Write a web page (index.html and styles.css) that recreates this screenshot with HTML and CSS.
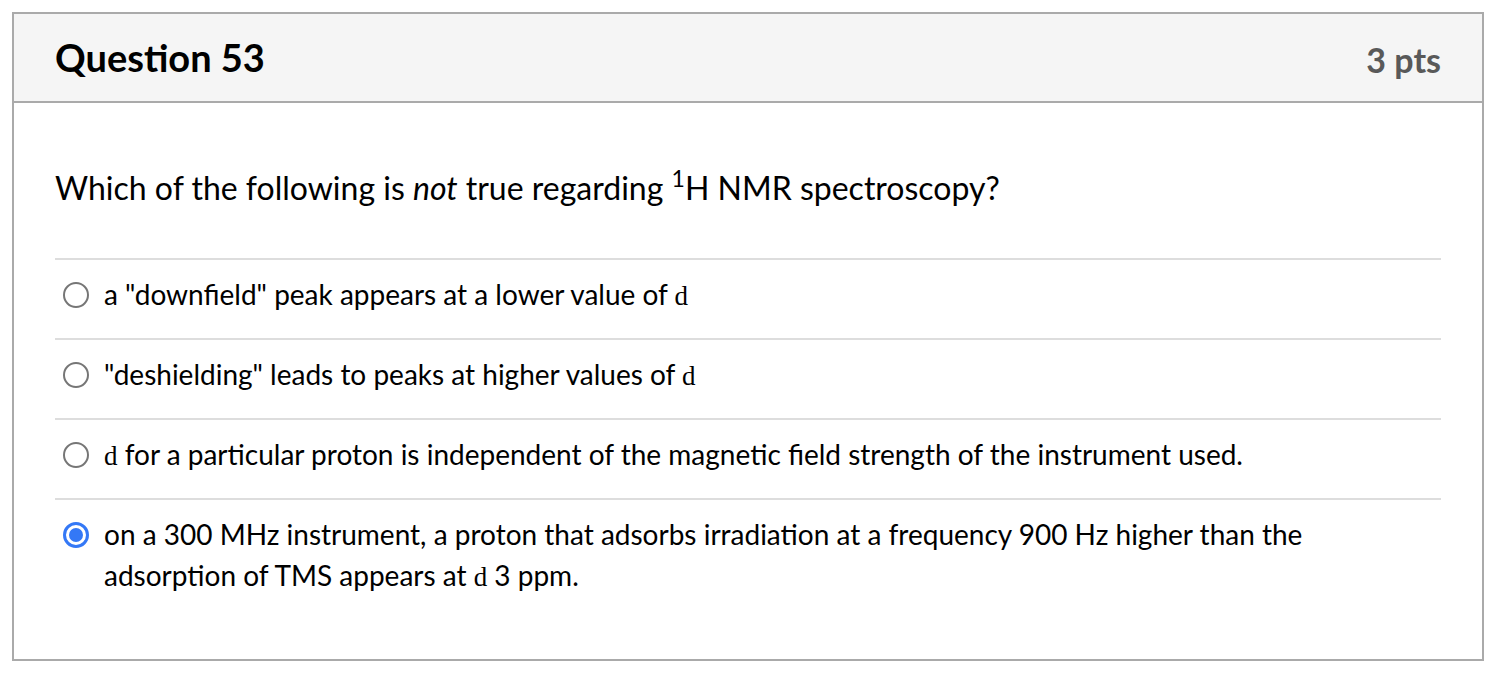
FILE: index.html
```html
<!DOCTYPE html>
<html>
<head>
<meta charset="utf-8">
<link rel="stylesheet" href="styles.css">
</head>
<body>
<div class="question">
  <div class="header">
    <h2 class="title">Question 53</h2>
    <div class="points">3 pts</div>
  </div>
  <div class="content">
    <p class="prompt">Which of the following is <em>not</em> true regarding <sup>1</sup>H NMR spectroscopy?</p>
    <div class="answers">
      <label class="answer">
        <span class="radio"></span>
        <span class="text">a "downfield" peak appears at a lower value of <span class="sym">d</span></span>
      </label>
      <label class="answer">
        <span class="radio"></span>
        <span class="text">"deshielding" leads to peaks at higher values of <span class="sym">d</span></span>
      </label>
      <label class="answer">
        <span class="radio"></span>
        <span class="text"><span class="sym">d</span> for a particular proton is independent of the magnetic field strength of the instrument used.</span>
      </label>
      <label class="answer">
        <span class="radio checked"></span>
        <span class="text">on a 300 MHz instrument, a proton that adsorbs irradiation at a frequency 900 Hz higher than the adsorption of TMS appears at <span class="sym">d</span> 3 ppm.</span>
      </label>
    </div>
  </div>
</div>
</body>
</html>
```
FILE: styles.css
```css
html, body {
  margin: 0;
  padding: 0;
  background: #fff;
}
body {
  padding: 12px 14px 0 12px;
  font-family: Lato, "Open Sans", sans-serif;
  color: #000;
}
.question {
  border: 2px solid #aaaaaa;
  width: 1472px;
  box-sizing: border-box;
}
.header {
  background: #f5f5f5;
  border-bottom: 2px solid #aaaaaa;
  height: 89px;
  box-sizing: border-box;
  padding: 0 41px;
  display: flex;
  align-items: center;
  justify-content: space-between;
}
.title {
  margin: 0;
  font-size: 38px;
  font-weight: 700;
  color: #000;
  line-height: 1;
  padding-bottom: 2px;
}
.points {
  font-size: 34px;
  font-weight: 700;
  color: #595959;
  padding-top: 3px;
}
.content {
  padding: 61px 41px 40px;
}
.prompt {
  margin: 0 0 46px;
  font-size: 32px;
  line-height: 48px;
}
.prompt sup {
  font-size: 23px;
  line-height: 0;
  position: relative;
  top: -1px;
}
.answers {
  display: flex;
  flex-direction: column;
}
.answer {
  display: flex;
  align-items: flex-start;
  gap: 15px;
  border-top: 2px solid #dddddd;
  padding: 14px 0 23px 8px;
  font-size: 28px;
  line-height: 41px;
}
.radio {
  flex: none;
  width: 26px;
  height: 26px;
  margin-top: 8px;
  box-sizing: border-box;
  border: 2px solid #767676;
  border-radius: 50%;
  background: #fff;
  display: flex;
  align-items: center;
  justify-content: center;
}
.radio.checked {
  border: 3px solid #3478f6;
}
.radio.checked::after {
  content: "";
  width: 14px;
  height: 14px;
  border-radius: 50%;
  background: #3478f6;
}
.sym {
  font-family: "Liberation Serif", serif;
  font-size: 27px;
  line-height: 1;
}
```
